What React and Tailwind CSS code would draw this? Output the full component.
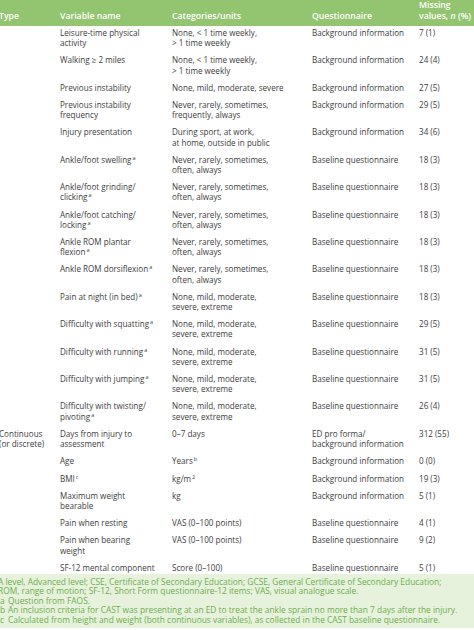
import React from 'react';

// Tabela de variáveis — linhas com quebras explícitas como no original
const Sup = ({ children }) => (
  <span className="relative -top-[3px] ml-[1px] text-[5.5px] leading-none">{children}</span>
);

const ROWS = [
  { type: '', name: ['Leisure-time physical', 'activity'], cat: ['None, < 1 time weekly,', '> 1 time weekly'], q: ['Background information'], m: '7 (1)' },
  { type: '', name: ['Walking ≥ 2 miles'], cat: ['None, < 1 time weekly,', '> 1 time weekly'], q: ['Background information'], m: '24 (4)' },
  { type: '', name: ['Previous instability'], cat: ['None, mild, moderate, severe'], q: ['Background information'], m: '27 (5)' },
  { type: '', name: ['Previous instability', 'frequency'], cat: ['Never, rarely, sometimes,', 'frequently, always'], q: ['Background information'], m: '29 (5)' },
  { type: '', name: ['Injury presentation'], cat: ['During sport, at work,', 'at home, outside in public'], q: ['Background information'], m: '34 (6)' },
  { type: '', name: ['Ankle/foot swelling'], sup: 'a', cat: ['Never, rarely, sometimes,', 'often, always'], q: ['Baseline questionnaire'], m: '18 (3)' },
  { type: '', name: ['Ankle/foot grinding/', 'clicking'], sup: 'a', cat: ['Never, rarely, sometimes,', 'often, always'], q: ['Baseline questionnaire'], m: '18 (3)' },
  { type: '', name: ['Ankle/foot catching/', 'locking'], sup: 'a', cat: ['Never, rarely, sometimes,', 'often, always'], q: ['Baseline questionnaire'], m: '18 (3)' },
  { type: '', name: ['Ankle ROM plantar', 'flexion'], sup: 'a', cat: ['Never, rarely, sometimes,', 'often, always'], q: ['Baseline questionnaire'], m: '18 (3)' },
  { type: '', name: ['Ankle ROM dorsiflexion'], sup: 'a', cat: ['Never, rarely, sometimes,', 'often, always'], q: ['Baseline questionnaire'], m: '18 (3)' },
  { type: '', name: ['Pain at night (in bed)'], sup: 'a', cat: ['None, mild, moderate,', 'severe, extreme'], q: ['Baseline questionnaire'], m: '18 (3)' },
  { type: '', name: ['Difficulty with squatting'], sup: 'a', cat: ['None, mild, moderate,', 'severe, extreme'], q: ['Baseline questionnaire'], m: '29 (5)' },
  { type: '', name: ['Difficulty with running'], sup: 'a', cat: ['None, mild, moderate,', 'severe, extreme'], q: ['Baseline questionnaire'], m: '31 (5)' },
  { type: '', name: ['Difficulty with jumping'], sup: 'a', cat: ['None, mild, moderate,', 'severe, extreme'], q: ['Baseline questionnaire'], m: '31 (5)' },
  { type: '', name: ['Difficulty with twisting/', 'pivoting'], sup: 'a', cat: ['None, mild, moderate,', 'severe, extreme'], q: ['Baseline questionnaire'], m: '26 (4)' },
  { type: ['Continuous', '(or discrete)'], name: ['Days from injury to', 'assessment'], cat: ['0–7 days'], q: ['ED pro forma/', 'background information'], m: '312 (55)' },
  { type: '', name: ['Age'], cat: ['Years'], catSup: 'b', q: ['Background information'], m: '0 (0)' },
  { type: '', name: ['BMI'], sup: 'c', cat: ['kg/m'], catSup: '2', q: ['Background information'], m: '19 (3)' },
  { type: '', name: ['Maximum weight', 'bearable'], cat: ['kg'], q: ['Background information'], m: '5 (1)' },
  { type: '', name: ['Pain when resting'], cat: ['VAS (0–100 points)'], q: ['Baseline questionnaire'], m: '4 (1)' },
  { type: '', name: ['Pain when bearing', 'weight'], cat: ['VAS (0–100 points)'], q: ['Baseline questionnaire'], m: '9 (2)' },
  { type: '', name: ['SF-12 mental component'], cat: ['Score (0–100)'], q: ['Baseline questionnaire'], m: '5 (1)', last: true },
];

const Lines = ({ lines, sup }) => (
  <>
    {lines.map((l, i) => (
      <div key={i} className="whitespace-nowrap">
        {l}
        {sup && i === lines.length - 1 && <Sup>{sup}</Sup>}
      </div>
    ))}
  </>
);

const COLS = 'grid grid-cols-[61px_112px_140px_107px_1fr]';

const Note = ({ mark, children }) => (
  <div className="flex">
    <span className="w-[10px] shrink-0 pl-[2px]">{mark}</span>
    <span>{children}</span>
  </div>
);

export default function App() {
  return (
    <div
      className="w-[474px] h-[630px] overflow-hidden bg-white text-[#3d3d3d]"
      style={{ fontFamily: '"Open Sans", "Noto Sans", sans-serif' }}
    >
      {/* Cabeçalho verde */}
      <div className={`${COLS} -ml-[1px] h-[26px] items-end bg-[#93c46f] pb-[5px] text-[8.7px] leading-[11px] font-semibold text-white`}>
        <div>Type</div>
        <div>Variable name</div>
        <div>Categories/units</div>
        <div>Questionnaire</div>
        <div className="whitespace-nowrap">
          Missing
          <br />
          values, <i>n</i> (%)
        </div>
      </div>

      {/* Linhas */}
      <div className="text-[8.1px] leading-[10.2px]">
        {ROWS.map((r, i) => (
          <div key={i} className={`${COLS} -ml-[1px] pt-[2px] ${r.last ? 'pb-[1px]' : 'pb-[5px]'}`}>
            <div className="whitespace-nowrap">{r.type && <Lines lines={r.type} />}</div>
            <div><Lines lines={r.name} sup={r.sup} /></div>
            <div><Lines lines={r.cat} sup={r.catSup} /></div>
            <div><Lines lines={r.q} /></div>
            <div className="whitespace-nowrap">{r.m}</div>
          </div>
        ))}
      </div>

      {/* Rodapé com notas */}
      <div className="bg-[#e6f2dc] pt-[3px] pb-[4px] text-[8.4px] leading-[9.5px] text-[#6eae4c] whitespace-nowrap -ml-[2px]">
        <div>A level, Advanced level; CSE, Certificate of Secondary Education; GCSE, General Certificate of Secondary Education;</div>
        <div>ROM, range of motion; SF-12, Short Form questionnaire-12 items; VAS, visual analogue scale.</div>
        <Note mark="a">Question from FAOS.</Note>
        <Note mark="b">An inclusion criteria for CAST was presenting at an ED to treat the ankle sprain no more than 7 days after the injury.</Note>
        <Note mark="c">Calculated from height and weight (both continuous variables), as collected in the CAST baseline questionnaire.</Note>
      </div>
    </div>
  );
}
